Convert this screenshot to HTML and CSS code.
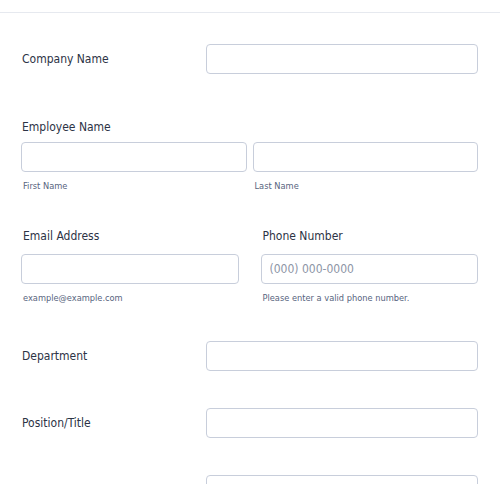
FILE: index.html
```html
<!DOCTYPE html>
<html lang="en">
<head>
  <meta charset="UTF-8" />
  <meta name="viewport" content="width=device-width, initial-scale=1.0" />
  <title>Employee Information Form</title>
  <link rel="stylesheet" href="styles.css">
</head>
<body>
  <header class="topbar"></header>

  <main>
    <form class="form-list">
      <div class="row row-inline">
        <label class="label">Company Name</label>
        <input class="field" type="text">
      </div>

      <div class="row row-top row-name">
        <label class="label">Employee Name</label>
        <div class="pair pair-name">
          <div class="sub">
            <input class="field" type="text">
            <span class="sublabel">First Name</span>
          </div>
          <div class="sub">
            <input class="field" type="text">
            <span class="sublabel">Last Name</span>
          </div>
        </div>
      </div>

      <div class="row row-top">
        <div class="pair pair-contact">
          <div class="sub">
            <label class="label label-top">Email Address</label>
            <input class="field" type="email">
            <span class="sublabel">example@example.com</span>
          </div>
          <div class="sub">
            <label class="label label-top">Phone Number</label>
            <input class="field" type="tel" placeholder="(000) 000-0000">
            <span class="sublabel">Please enter a valid phone number.</span>
          </div>
        </div>
      </div>

      <div class="row row-inline">
        <label class="label">Department</label>
        <input class="field" type="text">
      </div>

      <div class="row row-inline">
        <label class="label">Position/Title</label>
        <input class="field" type="text">
      </div>

      <div class="row row-inline">
        <label class="label"></label>
        <input class="field" type="text">
      </div>
    </form>
  </main>
</body>
</html>
```

FILE: styles.css
```css
body {
  font-family: 'DejaVu Sans Condensed', 'DejaVu Sans', sans-serif;
  font-stretch: condensed;
  background-color: #fff;
  margin: 0;
  padding: 0;
  color: #2c3345;
}
.topbar {
  height: 12px;
  border-bottom: 1px solid #e6e9ef;
}
.form-list {
  margin: 12px 0 0;
  padding: 0 22px 0 21px;
}
.row {
  padding: 19px 0 18px;
}
.row-inline {
  display: flex;
  align-items: center;
}
.row-inline .label {
  box-sizing: border-box;
  width: 185px;
  flex: none;
  padding-left: 1px;
}
.row-inline .field {
  flex: 1;
}
.row-top {
  padding: 18px 0;
}
.row-name {
  padding-top: 27px;
}
.label {
  display: block;
  font-size: 12px;
  line-height: 16px;
  color: #2c3345;
}
.row-name > .label {
  margin: 0 0 7px 1px;
}
.label-top {
  margin: 0 0 10px 2px;
}
.pair {
  display: flex;
}
.pair-name {
  gap: 6px;
}
.pair-contact {
  gap: 22px;
}
.sub {
  flex: 1;
  display: flex;
  flex-direction: column;
}
.field {
  display: block;
  box-sizing: border-box;
  width: 100%;
  height: 30px;
  margin: 0;
  padding: 0 8px;
  border: 1px solid #c8cedb;
  border-radius: 4px;
  background: #fff;
  font-family: inherit;
  font-stretch: inherit;
  font-size: 12px;
  color: #2c3345;
}
.field::placeholder {
  color: #8d95a6;
}
.sublabel {
  display: block;
  margin: 8px 0 0 2px;
  font-size: 9.2px;
  line-height: 12px;
  color: #57647e;
}
```
